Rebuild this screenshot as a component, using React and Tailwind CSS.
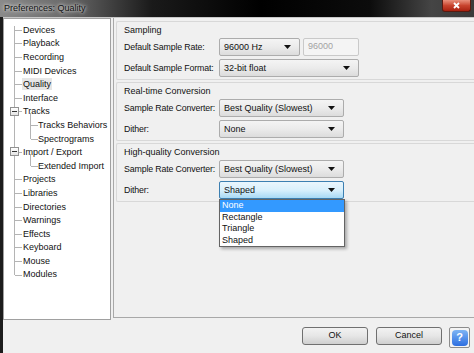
import React from 'react';

const font = { fontFamily: '"Liberation Sans", Arial, sans-serif' };

const treeItems = [
  { label: 'Devices', level: 0 },
  { label: 'Playback', level: 0 },
  { label: 'Recording', level: 0 },
  { label: 'MIDI Devices', level: 0 },
  { label: 'Quality', level: 0, selected: true },
  { label: 'Interface', level: 0 },
  { label: 'Tracks', level: 0, expander: true },
  { label: 'Tracks Behaviors', level: 1 },
  { label: 'Spectrograms', level: 1 },
  { label: 'Import / Export', level: 0, expander: true },
  { label: 'Extended Import', level: 1 },
  { label: 'Projects', level: 0 },
  { label: 'Libraries', level: 0 },
  { label: 'Directories', level: 0 },
  { label: 'Warnings', level: 0 },
  { label: 'Effects', level: 0 },
  { label: 'Keyboard', level: 0 },
  { label: 'Mouse', level: 0 },
  { label: 'Modules', level: 0 },
];

const ROW = 13.6;
const TOP = 4;

const TreeLines = () => {
  const cy = (i) => TOP + ROW * i + ROW / 2;
  const last = treeItems.length - 1;
  return (
    <svg className="absolute left-0 top-0" width="106" height="300">
      <g stroke="#b4b4b4" strokeWidth="1" shapeRendering="crispEdges">
        <line x1="10.5" y1={cy(0) - 4} x2="10.5" y2={cy(last)} />
        {treeItems.map((it, i) =>
          it.level === 0 ? (
            <line key={i} x1="10.5" y1={cy(i) + 0.5} x2="18" y2={cy(i) + 0.5} />
          ) : (
            <line key={i} x1="26.5" y1={cy(i) + 0.5} x2="34" y2={cy(i) + 0.5} />
          )
        )}
        <line x1="26.5" y1={cy(6) + 2} x2="26.5" y2={cy(8)} />
        <line x1="26.5" y1={cy(9) + 2} x2="26.5" y2={cy(10)} />
      </g>
    </svg>
  );
};

const Expander = () => (
  <span className="absolute left-[6px] top-[2px] w-[9px] h-[9px] border border-[#919191] bg-gradient-to-b from-white to-[#e4e4e4] flex items-center justify-center">
    <span className="w-[5px] h-px bg-[#333]" />
  </span>
);

const Arrow = () => (
  <svg width="7" height="4" viewBox="0 0 7 4" className="shrink-0">
    <path d="M0 0h7L3.5 4z" fill="#111" />
  </svg>
);

const Combo = ({ value, width, focused }) => (
  <div
    className={`h-[18px] rounded-[2px] border flex items-center pl-[4px] pr-[8px] justify-between ${
      focused
        ? 'border-[#3c7fb1] bg-gradient-to-b from-[#eaf6fd] via-[#d9f0fc] to-[#a7d9f5]'
        : 'border-[#acacac] bg-gradient-to-b from-[#f4f4f4] via-[#ebebeb] to-[#dcdcdc]'
    }`}
    style={{ width }}
  >
    <span className="text-[9px] text-[#111] leading-none whitespace-nowrap">{value}</span>
    <Arrow />
  </div>
);

const Row = ({ label, children }) => (
  <div className="flex items-center h-[18px]">
    <span className="w-[102px] pl-[7px] shrink-0 text-[8.8px] text-[#111] leading-none whitespace-nowrap tracking-[-0.15px]">{label}</span>
    {children}
  </div>
);

const Group = ({ title, children, className }) => (
  <div className={`ml-[2px] border-t border-b border-l border-[#d8d8d8] rounded-tl-[2px] rounded-bl-[2px] pb-[2px] ${className}`}>
    <div className="h-[16px] pl-[7px] flex items-center text-[9px] text-[#111] leading-none whitespace-nowrap">{title}</div>
    <div className="flex flex-col gap-[3px]">{children}</div>
  </div>
);

const Button = ({ children, width }) => (
  <div
    className="h-[18px] rounded-[3px] border border-[#707070] bg-gradient-to-b from-[#f2f2f2] via-[#e6e6e6] to-[#cfcfcf] flex items-center justify-center text-[9px] text-[#111]"
    style={{ width }}
  >
    {children}
  </div>
);

export default function App() {
  return (
    <div className="w-[474px] h-[353px] overflow-hidden flex flex-col bg-[#f0f0f0]" style={font}>
      {/* title bar */}
      <div className="h-[17px] shrink-0 relative flex items-center bg-[linear-gradient(90deg,#8a8a8a_0%,#6a6a6a_14%,#1a1a1a_32%,#000_55%,#0c0c0c_78%,#454545_91%,#3a3a3a_100%)]">
        <span className="pl-[4px] text-[9px] text-[#111] whitespace-nowrap [text-shadow:0_0_5px_#ddd,0_0_3px_#ddd]">Preferences: Quality</span>
        <div className="absolute right-[3px] top-0 w-[29px] h-[12px] rounded-b-[3px] border border-t-0 border-[#5a1a10] bg-gradient-to-b from-[#e8907c] via-[#c8442e] to-[#a8200e] flex items-center justify-center">
          <svg width="7" height="7" viewBox="0 0 7 7">
            <path d="M1 1l5 5M6 1l-5 5" stroke="#fff" strokeWidth="1.8" />
          </svg>
        </div>
      </div>

      <div className="flex flex-1">
        <div className="w-[3px] shrink-0 bg-[#1c1c1c]" />
        <div className="flex-1 flex flex-col border-t border-[#c8c8c8]">
          <div className="flex h-[302px]">
            {/* tree */}
            <div className="w-[108px] h-[302px] shrink-0 bg-white border border-[#a0a0a0] relative">
              <TreeLines />
              <div className="relative" style={{ paddingTop: TOP }}>
                {treeItems.map((it) => (
                  <div key={it.label} className="relative flex items-center" style={{ height: ROW }}>
                    {it.expander && <Expander />}
                    <span
                      className={`text-[9px] leading-[12px] text-[#111] px-px whitespace-nowrap ${it.level ? 'ml-[33px]' : 'ml-[18px]'} ${
                        it.selected ? 'bg-[#e6e6e6]' : ''
                      }`}
                    >
                      {it.label}
                    </span>
                  </div>
                ))}
              </div>
            </div>

            {/* settings panel */}
            <div className="ml-[2px] flex-1 h-[300px] border-l border-b border-[#a8a8a8] relative">
              <Group title="Sampling" className="mt-[3px]">
                <Row label="Default Sample Rate:">
                  <Combo value="96000 Hz" width={81} />
                  <div className="ml-[3px] w-[56px] h-[18px] border border-[#c9c9c9] rounded-[2px] bg-[#f4f4f4] flex items-center pl-[4px] text-[9px] text-[#a3a3a3]">
                    96000
                  </div>
                </Row>
                <Row label="Default Sample Format:">
                  <Combo value="32-bit float" width={140} />
                </Row>
              </Group>
              <Group title="Real-time Conversion" className="mt-[2px]">
                <Row label="Sample Rate Converter:">
                  <Combo value="Best Quality (Slowest)" width={125} />
                </Row>
                <Row label="Dither:">
                  <Combo value="None" width={125} />
                </Row>
              </Group>
              <Group title="High-quality Conversion" className="mt-[2px]">
                <Row label="Sample Rate Converter:">
                  <Combo value="Best Quality (Slowest)" width={125} />
                </Row>
                <Row label="Dither:">
                  <Combo value="Shaped" width={125} focused />
                </Row>
              </Group>

              {/* open dropdown */}
              <div className="absolute left-[105px] top-[181px] w-[126px] bg-white border border-[#646464] shadow-[2px_2px_3px_rgba(0,0,0,0.3)] flex flex-col">
                {['None', 'Rectangle', 'Triangle', 'Shaped'].map((o, i) => (
                  <div
                    key={o}
                    className={`h-[11.5px] leading-[11.5px] pl-[2px] text-[9px] ${i === 0 ? 'bg-[#3399ff] text-white' : 'text-[#111]'}`}
                  >
                    {o}
                  </div>
                ))}
              </div>
            </div>
          </div>

          {/* buttons */}
          <div className="flex-1 flex items-start justify-end pt-[7px] pr-[4px]">
            <Button width={66}>OK</Button>
            <div className="ml-[8px]">
              <Button width={66}>Cancel</Button>
            </div>
            <div className="ml-[7px] w-[21px] h-[21px] border border-[#8c8c8c] rounded-[2px] bg-[#f4f4f4] flex items-center justify-center">
              <div className="w-[16px] h-[16px] rounded-[4px] bg-gradient-to-b from-[#7eb4f4] to-[#2d6ee0] flex items-center justify-center text-white text-[11px] font-bold leading-none">
                ?
              </div>
            </div>
          </div>
        </div>
      </div>
    </div>
  );
}
